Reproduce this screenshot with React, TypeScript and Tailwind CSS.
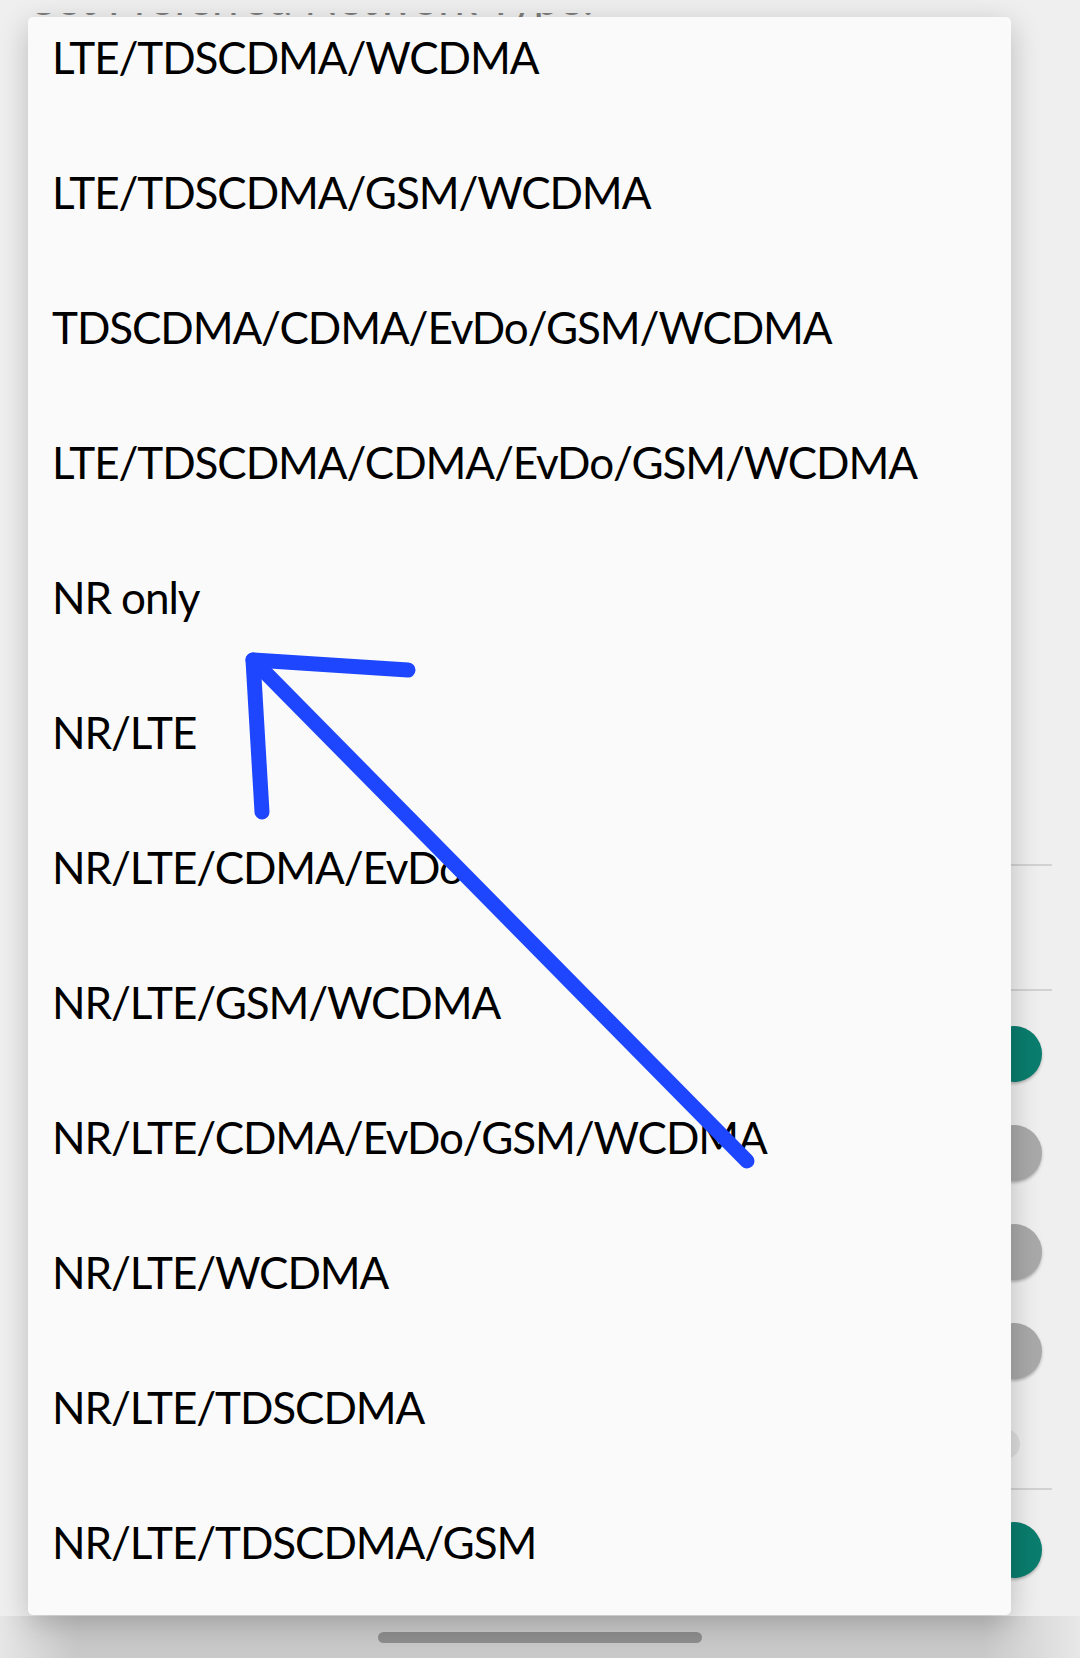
import React from "react";

const modes = [
  "LTE/TDSCDMA/WCDMA",
  "LTE/TDSCDMA/GSM/WCDMA",
  "TDSCDMA/CDMA/EvDo/GSM/WCDMA",
  "LTE/TDSCDMA/CDMA/EvDo/GSM/WCDMA",
  "NR only",
  "NR/LTE",
  "NR/LTE/CDMA/EvDo",
  "NR/LTE/GSM/WCDMA",
  "NR/LTE/CDMA/EvDo/GSM/WCDMA",
  "NR/LTE/WCDMA",
  "NR/LTE/TDSCDMA",
  "NR/LTE/TDSCDMA/GSM",
];

function Thumb({ on }: { on?: boolean }) {
  return (
    <div
      className={
        on
          ? "h-[56px] w-[56px] rounded-full bg-[#0a7d6e] shadow-[0_2px_3px_rgba(0,0,0,0.25)]"
          : "h-[56px] w-[56px] rounded-full bg-[#a9a9a9] shadow-[0_2px_3px_rgba(0,0,0,0.25)]"
      }
    />
  );
}

function SwitchRow({ on, h = "h-[99px]" }: { on?: boolean; h?: string }) {
  return (
    <div className={`flex items-center justify-end pr-[38px] ${h}`}>
      <Thumb on={on} />
    </div>
  );
}

function Divider() {
  return <div className="ml-[60px] mr-[28px] h-[2px] bg-[#d2d2d2]" />;
}

function Arrow() {
  return (
    <svg className="pointer-events-none absolute left-0 top-0" width="1080" height="1658" viewBox="0 0 1080 1658">
      <g stroke="#1e46ff" strokeWidth="15" strokeLinecap="round" strokeLinejoin="round" fill="none">
        <path d="M747 1161 L253 660" />
        <path d="M408 670 L253 660 L262 812" />
      </g>
    </svg>
  );
}

export default function App() {
  return (
    <div className="relative flex h-[1658px] w-[1080px] flex-col overflow-hidden bg-[#efefef] font-['Lato',sans-serif]">
      {/* settings page behind the scrim */}
      <div className="flex flex-1 flex-col">
        <div className="h-[864px]">
          <div className="mt-[13px] h-[4px] overflow-hidden pl-[32px]">
            <p className="mt-[-37px] whitespace-nowrap text-[45px] leading-none text-[#333] opacity-60">
              Set Preferred Network Type:
            </p>
          </div>
        </div>
        <Divider />
        <div className="h-[123px]" />
        <Divider />
        <div className="h-[13px]" />
        <SwitchRow on />
        <SwitchRow />
        <SwitchRow />
        <SwitchRow />
        <div className="flex h-[88px] items-center justify-end pr-[60px]">
          <div className="h-[30px] w-[32px] rounded-full bg-[#dedede]" />
        </div>
        <Divider />
        <SwitchRow on h="h-[120px]" />
      </div>

      {/* nav bar */}
      <div className="flex h-[42px] shrink-0 items-start justify-center bg-[linear-gradient(to_right,#e6e6e6_0%,#c9c9c9_7%,#c9c9c9_91%,#e8e8e8_100%)]">
        <div className="mt-[16px] h-[11px] w-[324px] rounded-full bg-[#8e8e8e]" />
      </div>

      {/* dialog */}
      <div className="absolute left-[28px] top-[17px] h-[1598px] w-[983px] overflow-hidden rounded-[5px] bg-[#fafafa] shadow-[0_8px_30px_rgba(0,0,0,0.22)]">
        <ul className="mt-[-28px] flex flex-col">
          {modes.map((m) => (
            <li
              key={m}
              className="flex h-[135px] items-center pl-[24px] text-[44px] leading-none tracking-[-1.1px] text-black"
            >
              {m}
            </li>
          ))}
        </ul>
      </div>

      <Arrow />
    </div>
  );
}
